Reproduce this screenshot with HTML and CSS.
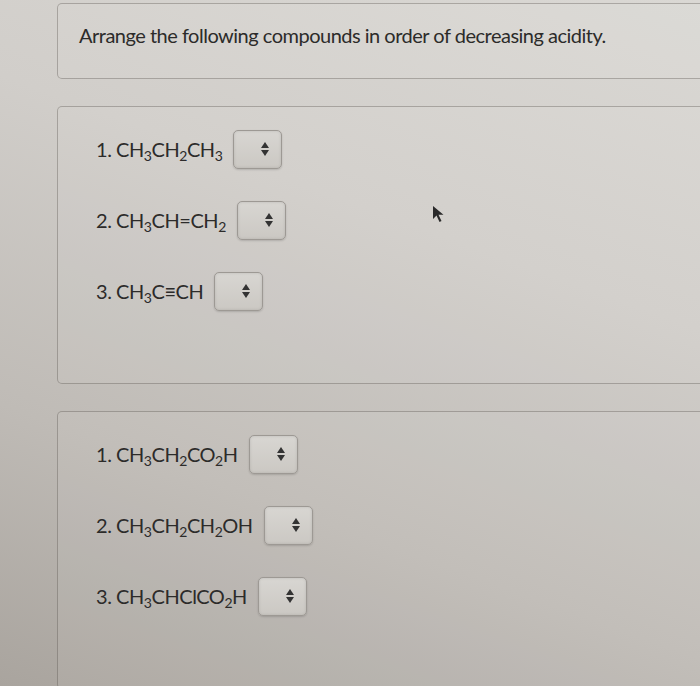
FILE: index.html
```html
<!DOCTYPE html>
<html lang="en">
<head>
    <meta charset="UTF-8">
    <meta name="viewport" content="width=device-width, initial-scale=1.0">
    <title>Acidity Order</title>
    <link rel="stylesheet" href="styles.css">
</head>
<body>
    <div class="container">
        <div class="panel prompt">
            <p>Arrange the following compounds in order of decreasing acidity.</p>
        </div>

        <div class="panel">
            <div class="row">
                <span class="label">1. CH<sub>3</sub>CH<sub>2</sub>CH<sub>3</sub></span>
                <div class="picker"></div>
            </div>
            <div class="row">
                <span class="label">2. CH<sub>3</sub>CH=CH<sub>2</sub></span>
                <div class="picker"></div>
            </div>
            <div class="row">
                <span class="label">3. CH<sub>3</sub>C&#8801;CH</span>
                <div class="picker"></div>
            </div>
        </div>

        <div class="panel">
            <div class="row">
                <span class="label">1. CH<sub>3</sub>CH<sub>2</sub>CO<sub>2</sub>H</span>
                <div class="picker"></div>
            </div>
            <div class="row">
                <span class="label">2. CH<sub>3</sub>CH<sub>2</sub>CH<sub>2</sub>OH</span>
                <div class="picker"></div>
            </div>
            <div class="row">
                <span class="label">3. CH<sub>3</sub>CHClCO<sub>2</sub>H</span>
                <div class="picker"></div>
            </div>
        </div>
    </div>

    <!-- mouse pointer -->
    <svg class="cursor" width="14" height="18" viewBox="0 0 14 18">
        <path d="M1 1 L1 14 L4.5 10.5 L7.5 17 L9.5 16 L6.5 9.8 L11.5 9.8 Z" fill="#2a2a2a"/>
    </svg>
</body>
</html>
```

FILE: styles.css
```css
body {
    font-family: Lato, 'Open Sans', sans-serif;
    margin: 0;
    height: 686px;
    overflow: hidden;
    color: #2c2b2a;
    background: linear-gradient(200deg, #dad8d4 0%, #d1cecA 35%, #bfbbb6 70%, #a9a49e 100%);
    position: relative;
}
.container {
    display: flex;
    flex-direction: column;
    gap: 27px;
    padding: 3px 0 0 57px;
    margin-right: -12px;
}
.panel {
    border: 1px solid rgba(80, 75, 70, 0.35);
    border-radius: 5px;
    background: rgba(255, 255, 255, 0.05);
    padding: 23px 0 73px 38px;
    display: flex;
    flex-direction: column;
    gap: 33px;
}
.prompt {
    padding: 19px 0 0 21px;
    height: 55px;
}
.prompt p {
    margin: 0;
    font-size: 20px;
    letter-spacing: -0.5px;
}
.row {
    display: flex;
    align-items: center;
    height: 38px;
}
.label {
    font-size: 20px;
    letter-spacing: -0.45px;
}
sub {
    font-size: 0.7em;
    vertical-align: -0.25em;
    line-height: 0;
}
.picker {
    position: relative;
    width: 47px;
    height: 37px;
    margin-left: 11px;
    border: 1px solid #9d9994;
    border-radius: 5px;
    background: linear-gradient(#d8d6d2, #cbc8c3);
    box-shadow: inset 0 0 3px rgba(0, 0, 0, 0.12), 0 1px 2px rgba(0, 0, 0, 0.15);
}
/* up / down arrows */
.picker::before,
.picker::after {
    content: "";
    position: absolute;
    right: 12px;
    border-left: 4px solid transparent;
    border-right: 4px solid transparent;
}
.picker::before {
    top: 11px;
    border-bottom: 6px solid #333;
}
.picker::after {
    top: 19px;
    border-top: 6px solid #333;
}
.cursor {
    position: absolute;
    left: 432px;
    top: 205px;
}
```
